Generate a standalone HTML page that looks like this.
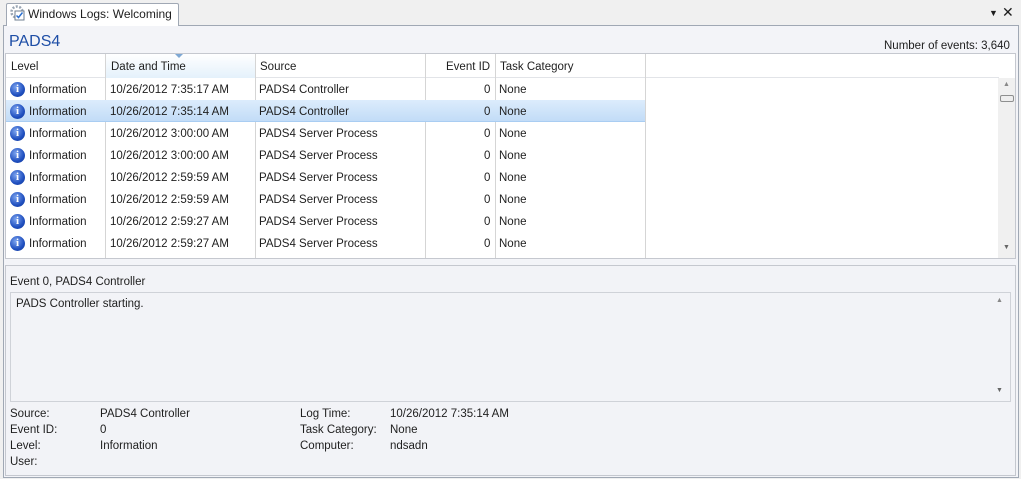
<!DOCTYPE html>
<html><head><style>
*{margin:0;padding:0;box-sizing:border-box}
body{width:1021px;height:479px;background:#f0f0f0;font-family:"Liberation Sans",sans-serif;font-size:11.5px;color:#1e1e1e;position:relative;overflow:hidden}
.a{position:absolute;white-space:nowrap}
.tab{left:6px;top:3px;width:173px;height:23px;background:#fff;border:1px solid #a0a8b4;border-bottom:none;border-radius:2px 2px 0 0}
.panel{left:3px;top:25px;width:1016px;height:453px;background:#f3f4f8;border:1px solid #a0a8b4}
.grid{left:5px;top:53px;width:1011px;height:206px;background:#fff;border:1px solid #c5c8cf;overflow:hidden}
.hdr{left:0;top:0;width:993px;height:24px;background:#fff;border-bottom:1px solid #e2e4e8}
.vl{position:absolute;top:0;width:1px;height:204px;background:#d5d5d5}
.row{position:absolute;left:0;width:639px;height:22px}
.sel{background:linear-gradient(#dcecfc,#c2dcf7);border-bottom:1px solid #a9cdf2}
.c{position:absolute;top:6px;white-space:nowrap}
.ic{position:absolute;left:4px;top:4px;width:15px;height:15px;border-radius:50%;background:radial-gradient(circle at 40% 35%,#7fa6f0,#1f4fbf 60%,#143a96);color:#fff;font:bold 11px "Liberation Serif",serif;text-align:center;line-height:15px}
.sb{left:992px;top:24px;width:17px;height:180px;background:#f0f0f0}
.lower{left:5px;top:265px;width:1011px;height:211px;border:1px solid #c5c8cf;background:#f2f3f7}
.tb{left:10px;top:292px;width:1001px;height:110px;background:#f2f3f7;border:1px solid #cfd2d8}
</style></head><body>
<div class="a panel"></div>
<div class="a tab"></div>
<svg class="a" style="left:10px;top:5px" width="16" height="16" viewBox="0 0 16 16"><circle cx="7" cy="7" r="5.5" fill="none" stroke="#9aa6b4" stroke-width="2.5" stroke-dasharray="2 1.5"/><rect x="5" y="6" width="9" height="9" fill="#fff" stroke="#6f7f90"/><path d="M6.5 10.5l2 2 4-5" fill="none" stroke="#2a6fd0" stroke-width="1.5"/></svg>
<div class="a" style="left:28px;top:7px;font-size:12px">Windows Logs: Welcoming</div>
<div class="a" style="left:989px;top:8px;font-size:9px">▼</div>
<div class="a" style="left:1002px;top:4px;font-size:14px">✕</div>
<div class="a" style="left:9px;top:33px;font-size:16px;color:#1e4ea6">PADS4</div>
<div class="a" style="left:884px;top:40px">Number of events: 3,640</div>
<div class="a grid">
 <div class="a hdr"></div>
 <div class="a" style="left:99px;top:0;width:150px;height:24px;background:linear-gradient(#fff,#e4f1fb);border-left:1px solid #a9cdf2"></div>
 <div class="a" style="left:169px;top:0;width:0;height:0;border-left:4px solid transparent;border-right:4px solid transparent;border-top:4px solid #7ea8d4"></div>
 <div class="vl" style="left:99px"></div><div class="vl" style="left:249px"></div><div class="vl" style="left:419px"></div><div class="vl" style="left:489px"></div><div class="vl" style="left:639px"></div>
 <div class="c" style="left:5px;top:7px">Level</div>
 <div class="c" style="left:105px;top:7px">Date and Time</div>
 <div class="c" style="left:254px;top:7px">Source</div>
 <div class="c" style="left:440px;top:7px">Event ID</div>
 <div class="c" style="left:494px;top:7px">Task Category</div>
 <div class="row" style="top:24px"><div class="ic">i</div><div class="c" style="left:23px">Information</div><div class="c" style="left:104px">10/26/2012 7:35:17 AM</div><div class="c" style="left:253px">PADS4 Controller</div><div class="c" style="left:478px">0</div><div class="c" style="left:493px">None</div></div>
 <div class="row sel" style="top:46px"><div class="ic">i</div><div class="c" style="left:23px">Information</div><div class="c" style="left:104px">10/26/2012 7:35:14 AM</div><div class="c" style="left:253px">PADS4 Controller</div><div class="c" style="left:478px">0</div><div class="c" style="left:493px">None</div></div>
 <div class="row" style="top:68px"><div class="ic">i</div><div class="c" style="left:23px">Information</div><div class="c" style="left:104px">10/26/2012 3:00:00 AM</div><div class="c" style="left:253px">PADS4 Server Process</div><div class="c" style="left:478px">0</div><div class="c" style="left:493px">None</div></div>
 <div class="row" style="top:90px"><div class="ic">i</div><div class="c" style="left:23px">Information</div><div class="c" style="left:104px">10/26/2012 3:00:00 AM</div><div class="c" style="left:253px">PADS4 Server Process</div><div class="c" style="left:478px">0</div><div class="c" style="left:493px">None</div></div>
 <div class="row" style="top:112px"><div class="ic">i</div><div class="c" style="left:23px">Information</div><div class="c" style="left:104px">10/26/2012 2:59:59 AM</div><div class="c" style="left:253px">PADS4 Server Process</div><div class="c" style="left:478px">0</div><div class="c" style="left:493px">None</div></div>
 <div class="row" style="top:134px"><div class="ic">i</div><div class="c" style="left:23px">Information</div><div class="c" style="left:104px">10/26/2012 2:59:59 AM</div><div class="c" style="left:253px">PADS4 Server Process</div><div class="c" style="left:478px">0</div><div class="c" style="left:493px">None</div></div>
 <div class="row" style="top:156px"><div class="ic">i</div><div class="c" style="left:23px">Information</div><div class="c" style="left:104px">10/26/2012 2:59:27 AM</div><div class="c" style="left:253px">PADS4 Server Process</div><div class="c" style="left:478px">0</div><div class="c" style="left:493px">None</div></div>
 <div class="row" style="top:178px"><div class="ic">i</div><div class="c" style="left:23px">Information</div><div class="c" style="left:104px">10/26/2012 2:59:27 AM</div><div class="c" style="left:253px">PADS4 Server Process</div><div class="c" style="left:478px">0</div><div class="c" style="left:493px">None</div></div>
 <div class="a sb"></div>
 <div class="a" style="left:997px;top:27px;font-size:7px;color:#888">▲</div>
 <div class="a" style="left:994px;top:41px;width:14px;height:7px;border:1px solid #8e8f8f;border-radius:2px;background:#eee"></div>
 <div class="a" style="left:997px;top:190px;font-size:7px;color:#666">▼</div>
</div>
<div class="a lower"></div>
<div class="a" style="left:10px;top:276px">Event 0, PADS4 Controller</div>
<div class="a tb"></div>
<div class="a" style="left:16px;top:298px">PADS Controller starting.</div>
<div class="a" style="left:996px;top:297px;font-size:7px;color:#888">▲</div>
<div class="a" style="left:996px;top:387px;font-size:7px;color:#666">▼</div>
<div class="a" style="left:10px;top:406px;line-height:16px">Source:<br>Event ID:<br>Level:<br>User:</div>
<div class="a" style="left:100px;top:406px;line-height:16px">PADS4 Controller<br>0<br>Information</div>
<div class="a" style="left:300px;top:406px;line-height:16px">Log Time:<br>Task Category:<br>Computer:</div>
<div class="a" style="left:390px;top:406px;line-height:16px">10/26/2012 7:35:14 AM<br>None<br>ndsadn</div>
</body></html>
